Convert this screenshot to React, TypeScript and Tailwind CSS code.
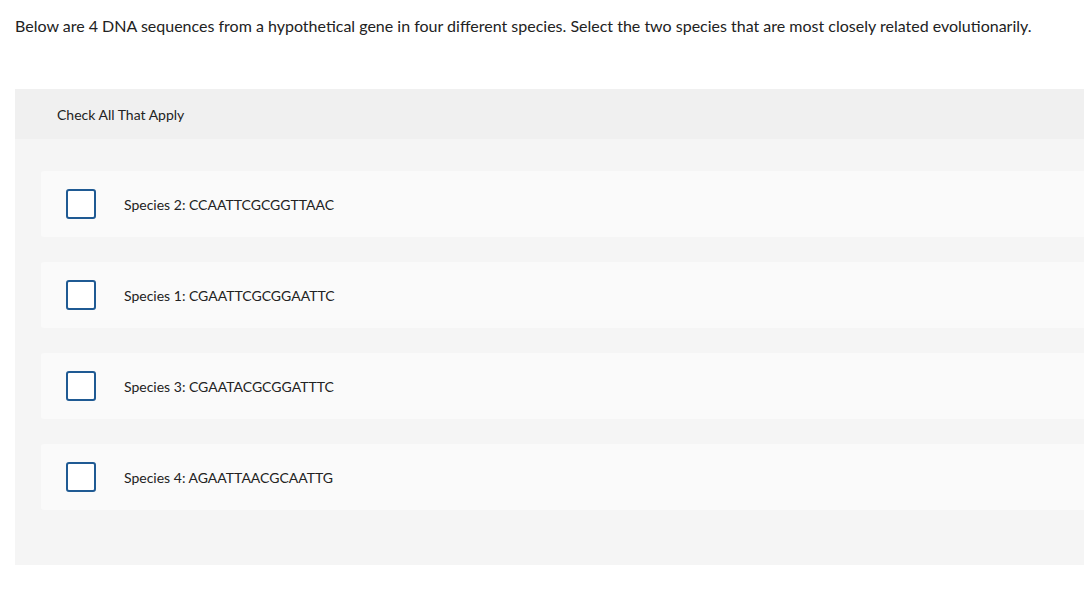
const species = [
  "Species 2: CCAATTCGCGGTTAAC",
  "Species 1: CGAATTCGCGGAATTC",
  "Species 3: CGAATACGCGGATTTC",
  "Species 4: AGAATTAACGCAATTG",
];

export default function App() {
  return (
    <div className="h-[592px] w-[1084px] overflow-hidden bg-white font-['Lato',sans-serif] text-[#222]">
      <p className="pl-[15px] pt-[16px] text-[16px] leading-[20px]">
        Below are 4 DNA sequences from a hypothetical gene in four different species. Select the two species that are most
        closely related evolutionarily.
      </p>
      <div className="ml-[15px] mt-[53px] w-[1100px] bg-[#f5f5f5]">
        <div className="flex h-[50px] items-center bg-[#f0f0f0] pl-[42px] text-[14px]">Check All That Apply</div>
        <div className="flex flex-col gap-[25px] pb-[55px] pl-[26px] pt-[32px]">
          {species.map((s) => (
            <label key={s} className="flex h-[66px] items-center rounded-[3px] bg-[#fafafa] pl-[25px]">
              <span className="h-[30px] w-[30px] shrink-0 rounded-[3px] border-2 border-[#1f5a93] bg-white" />
              <span className="ml-[28px] text-[14px]">{s}</span>
            </label>
          ))}
        </div>
      </div>
    </div>
  );
}
